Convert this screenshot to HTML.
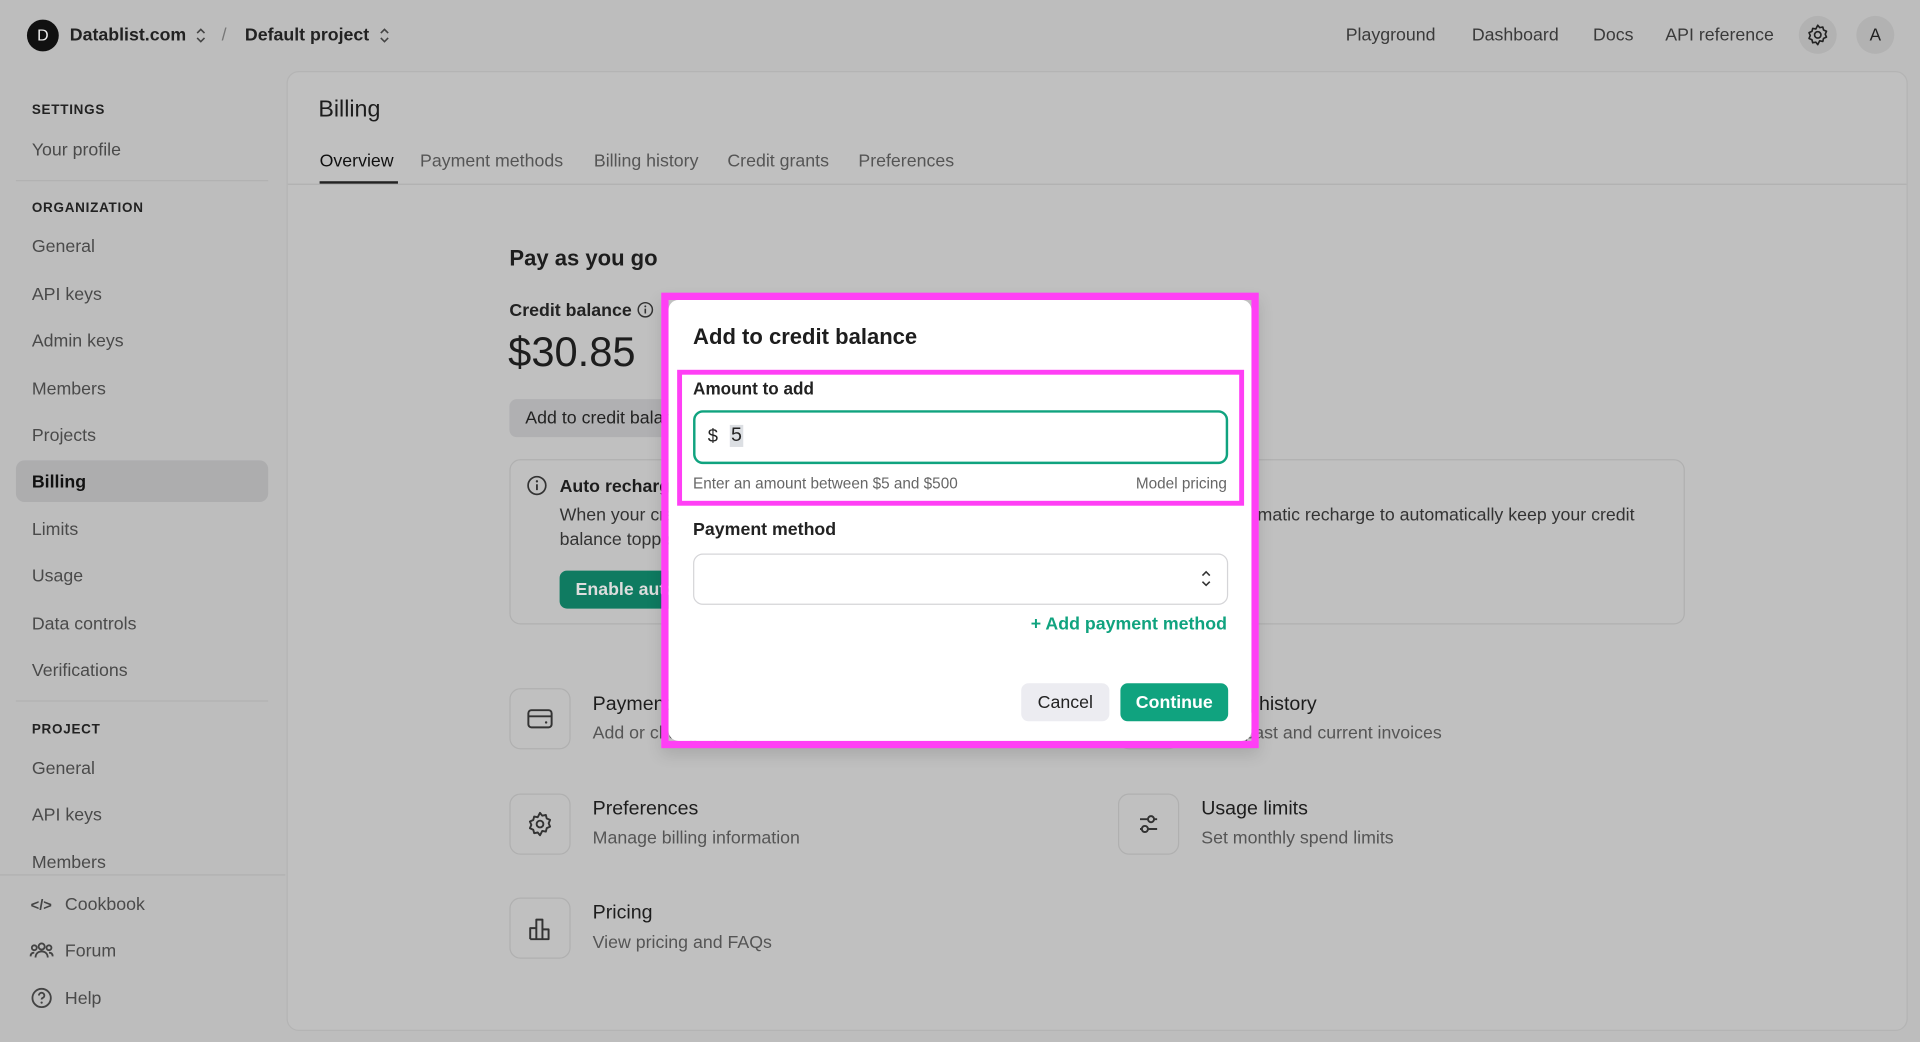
<!DOCTYPE html>
<html><head><meta charset="utf-8"><style>
*{box-sizing:border-box;margin:0;padding:0}
html,body{width:1920px;height:1042px;overflow:hidden;background:#bdbdbd}
body{font-family:"Liberation Sans",sans-serif;color:#1a1a1a}
#w{position:absolute;left:0;top:0;width:1568px;height:851px;transform:scale(1.22449);transform-origin:0 0;background:#bdbdbd}
.a{position:absolute;white-space:nowrap}
.nav{font-size:14.5px;color:#3a3a3a}
.sb{font-size:14.5px;color:#4a4a4a;left:26px}
.sh{font-size:11px;font-weight:bold;letter-spacing:.6px;left:26px;color:#222}
.tab{font-size:14.5px;color:#555;top:124px}
.ic{position:absolute;width:50px;height:50px;border:1px solid #b0b0b0;border-radius:9px;background:#c0c0c0;display:flex;align-items:center;justify-content:center}
.ct{font-size:16px;color:#1d1d1d}
.cs{font-size:14.5px;color:#555}
</style></head><body><div id="w">
<!-- header -->
<div class="a" style="left:22px;top:16px;width:26px;height:26px;border-radius:50%;background:#111;color:#eee;font-size:13px;text-align:center;line-height:26px">D</div>
<div class="a" style="left:57px;top:21px;font-size:14.5px;font-weight:bold;color:#222">Datablist.com</div>
<svg class="a" style="left:159px;top:22px" width="10" height="14" viewBox="0 0 10 14"><path d="M2 5l3-3 3 3M2 9l3 3 3-3" stroke="#444" stroke-width="1.3" fill="none"/></svg>
<div class="a" style="left:181px;top:21px;font-size:14.5px;color:#777">/</div>
<div class="a" style="left:200px;top:21px;font-size:14.5px;font-weight:bold;color:#222">Default project</div>
<svg class="a" style="left:309px;top:22px" width="10" height="14" viewBox="0 0 10 14"><path d="M2 5l3-3 3 3M2 9l3 3 3-3" stroke="#444" stroke-width="1.3" fill="none"/></svg>
<div class="a nav" style="left:1099px;top:21px">Playground</div>
<div class="a nav" style="left:1202px;top:21px">Dashboard</div>
<div class="a nav" style="left:1301px;top:21px">Docs</div>
<div class="a nav" style="left:1360px;top:21px">API reference</div>
<div class="a" style="left:1469px;top:13px;width:31px;height:31px;border-radius:50%;background:#b2b2b2"></div>
<svg class="a" style="left:1475px;top:19px" width="19" height="19" viewBox="0 0 24 24"><path d="M12 2l2 2.5 3.2-.6.8 3.1 3 1.3-1.3 3 1.3 3-3 1.3-.8 3.1-3.2-.6L12 22l-2-2.5-3.2.6-.8-3.1-3-1.3 1.3-3-1.3-3 3-1.3.8-3.1 3.2.6z" fill="none" stroke="#222" stroke-width="1.7" stroke-linejoin="round"/><circle cx="12" cy="12" r="3.3" fill="none" stroke="#222" stroke-width="1.7"/></svg>
<div class="a" style="left:1516px;top:13px;width:31px;height:31px;border-radius:50%;background:#b2b2b2;text-align:center;line-height:31px;font-size:14px;color:#222">A</div>
<!-- sidebar -->
<div class="a sh" style="top:84px">SETTINGS</div>
<div class="a sb" style="top:115px">Your profile</div>
<div class="a" style="left:13px;top:147px;width:206px;height:1px;background:#b2b2b2"></div>
<div class="a sh" style="top:164px">ORGANIZATION</div>
<div class="a sb" style="top:194px">General</div>
<div class="a sb" style="top:233px">API keys</div>
<div class="a sb" style="top:271px">Admin keys</div>
<div class="a sb" style="top:310px">Members</div>
<div class="a sb" style="top:348px">Projects</div>
<div class="a" style="left:13px;top:376px;width:206px;height:34px;border-radius:7px;background:#adadae"></div>
<div class="a sb" style="top:386px;color:#111;font-weight:bold">Billing</div>
<div class="a sb" style="top:425px">Limits</div>
<div class="a sb" style="top:463px">Usage</div>
<div class="a sb" style="top:502px">Data controls</div>
<div class="a sb" style="top:540px">Verifications</div>
<div class="a" style="left:13px;top:572px;width:206px;height:1px;background:#b2b2b2"></div>
<div class="a sh" style="top:590px">PROJECT</div>
<div class="a sb" style="top:620px">General</div>
<div class="a sb" style="top:658px">API keys</div>
<div class="a sb" style="top:697px">Members</div>
<div class="a" style="left:0;top:714px;width:233px;height:137px;background:#bdbdbd;border-top:1px solid #b0b0b0"></div>
<div class="a sb" style="left:53px;top:731px">Cookbook</div>
<div class="a sb" style="left:53px;top:769px">Forum</div>
<div class="a sb" style="left:53px;top:808px">Help</div>
<div class="a" style="left:25px;top:732px;font-size:12px;font-weight:bold;color:#444">&lt;/&gt;</div>
<svg class="a" style="left:24px;top:769px" width="20" height="14" viewBox="0 0 20 14"><circle cx="10" cy="4" r="2.5" fill="none" stroke="#444" stroke-width="1.5"/><circle cx="4" cy="5" r="2" fill="none" stroke="#444" stroke-width="1.5"/><circle cx="16" cy="5" r="2" fill="none" stroke="#444" stroke-width="1.5"/><path d="M5 13c0-3 2-5 5-5s5 2 5 5M1 12c0-2 1-3 3-3M19 12c0-2-1-3-3-3" fill="none" stroke="#444" stroke-width="1.5"/></svg>
<svg class="a" style="left:25px;top:806px" width="18" height="18" viewBox="0 0 18 18"><circle cx="9" cy="9" r="7.5" fill="none" stroke="#444" stroke-width="1.5"/><path d="M6.8 7a2.2 2.2 0 1 1 3 2c-.6.3-.8.7-.8 1.3" fill="none" stroke="#444" stroke-width="1.5"/><circle cx="9" cy="12.8" r=".9" fill="#444"/></svg>
<!-- main panel -->
<div class="a" style="left:234px;top:58px;width:1324px;height:784px;background:#c0c0c0;border:1px solid #b4b4b4;border-radius:10px"></div>
<div class="a" style="left:260px;top:79px;font-size:19px;color:#1d1d1d">Billing</div>
<div class="a tab" style="left:261px;color:#111">Overview</div>
<div class="a tab" style="left:343px">Payment methods</div>
<div class="a tab" style="left:485px">Billing history</div>
<div class="a tab" style="left:594px">Credit grants</div>
<div class="a tab" style="left:701px">Preferences</div>
<div class="a" style="left:235px;top:150px;width:1322px;height:1px;background:#b0b0b0"></div>
<div class="a" style="left:261px;top:148px;width:64px;height:2px;background:#222"></div>
<div class="a" style="left:416px;top:201px;font-size:18px;font-weight:bold;color:#1d1d1d">Pay as you go</div>
<div class="a" style="left:416px;top:246px;font-size:14.5px;font-weight:bold;color:#222">Credit balance</div>
<svg class="a" style="left:520px;top:246px" width="14" height="14" viewBox="0 0 14 14"><circle cx="7" cy="7" r="5.8" fill="none" stroke="#333" stroke-width="1.2"/><path d="M7 6v4" stroke="#333" stroke-width="1.3"/><circle cx="7" cy="4.2" r=".8" fill="#333"/></svg>
<div class="a" style="left:415px;top:269px;font-size:34px;color:#1d1d1d">$30.85</div>
<div class="a" style="left:416px;top:326px;width:140px;height:31px;border-radius:6px;background:#b0b0b2;padding:8px 13px;font-size:14.5px;color:#222;overflow:hidden">Add to credit balance</div>
<div class="a" style="left:416px;top:375px;width:960px;height:135px;border:1px solid #b0b0b0;border-radius:9px"></div>
<svg class="a" style="left:430px;top:388px" width="17" height="17" viewBox="0 0 16 16"><circle cx="8" cy="8" r="6.8" fill="none" stroke="#333" stroke-width="1.3"/><path d="M8 7v4.5" stroke="#333" stroke-width="1.4"/><circle cx="8" cy="4.8" r=".9" fill="#333"/></svg>
<div class="a" style="left:457px;top:390px;font-size:14.5px;font-weight:bold;color:#1d1d1d">Auto recharge</div>
<div class="a" style="left:457px;top:413px;font-size:14.5px;color:#333">When your credit</div>
<div class="a" style="left:457px;top:433px;font-size:14.5px;color:#333">balance topped</div>
<div class="a" style="left:1027px;top:413px;font-size:14.5px;color:#333">matic recharge to automatically keep your credit</div>
<div class="a" style="left:457px;top:466px;width:100px;height:31px;border-radius:6px;background:#0f7b61;padding:8px 13px;font-size:14.5px;color:#ddd;font-weight:bold;overflow:hidden">Enable auto</div>
<!-- cards -->
<div class="ic" style="left:416px;top:562px"><svg width="22" height="18" viewBox="0 0 22 18"><rect x="1.5" y="2" width="19" height="14" rx="2.5" fill="none" stroke="#333" stroke-width="1.6"/><path d="M1.5 7h19" stroke="#333" stroke-width="1.6"/><circle cx="16" cy="12" r="1" fill="#333"/></svg></div>
<div class="a ct" style="left:484px;top:567px">Payment methods</div>
<div class="a cs" style="left:484px;top:591px">Add or change payment method</div>
<div class="ic" style="left:913px;top:562px"></div>
<div class="a ct" style="left:981px;top:567px">Billing history</div>
<div class="a cs" style="left:981px;top:591px">View past and current invoices</div>
<div class="ic" style="left:416px;top:648px"><svg width="22" height="22" viewBox="0 0 24 24"><path d="M12 2l2 2.5 3.2-.6.8 3.1 3 1.3-1.3 3 1.3 3-3 1.3-.8 3.1-3.2-.6L12 22l-2-2.5-3.2.6-.8-3.1-3-1.3 1.3-3-1.3-3 3-1.3.8-3.1 3.2.6z" fill="none" stroke="#333" stroke-width="1.7" stroke-linejoin="round"/><circle cx="12" cy="12" r="3" fill="none" stroke="#333" stroke-width="1.7"/></svg></div>
<div class="a ct" style="left:484px;top:652px">Preferences</div>
<div class="a cs" style="left:484px;top:677px">Manage billing information</div>
<div class="ic" style="left:913px;top:648px"><svg width="22" height="22" viewBox="0 0 22 22"><path d="M4 7h14M4 15h14" stroke="#333" stroke-width="1.6"/><circle cx="13" cy="7" r="2.5" fill="#c0c0c0" stroke="#333" stroke-width="1.6"/><circle cx="8" cy="15" r="2.5" fill="#c0c0c0" stroke="#333" stroke-width="1.6"/></svg></div>
<div class="a ct" style="left:981px;top:652px">Usage limits</div>
<div class="a cs" style="left:981px;top:677px">Set monthly spend limits</div>
<div class="ic" style="left:416px;top:733px"><svg width="22" height="22" viewBox="0 0 22 22"><path d="M3 20V11h5v9M8 20V4h5v16M13 20v-8h5v8zM3 20h15" fill="none" stroke="#333" stroke-width="1.6" stroke-linejoin="round"/></svg></div>
<div class="a ct" style="left:484px;top:737px">Pricing</div>
<div class="a cs" style="left:484px;top:762px">View pricing and FAQs</div>
<!-- modal -->
<div class="a" style="left:540px;top:239px;width:488px;height:372px;border:6px solid #ff3ff5;box-shadow:0 6px 12px rgba(0,0,0,.12)"></div>
<div class="a" style="left:546px;top:245px;width:476px;height:360px;background:#fff;border-radius:8px"></div>
<div class="a" style="left:566px;top:265px;font-size:18px;font-weight:bold;color:#1d1d1d">Add to credit balance</div>
<div class="a" style="left:553px;top:302px;width:463px;height:111px;border:4px solid #ff3ff5"></div>
<div class="a" style="left:566px;top:309px;font-size:14px;font-weight:bold;color:#222">Amount to add</div>
<div class="a" style="left:566px;top:335px;width:437px;height:44px;border:2px solid #10a37f;border-radius:8px"></div>
<div class="a" style="left:578px;top:348px;font-size:15px;color:#222">$</div>
<div class="a" style="left:596px;top:347px;font-size:16px;color:#222;background:#dcdfe3;padding:0 1px">5</div>
<div class="a" style="left:566px;top:388px;font-size:12.5px;color:#666">Enter an amount between $5 and $500</div>
<div class="a" style="right:566px;top:388px;font-size:12.5px;color:#666">Model pricing</div>
<div class="a" style="left:566px;top:425px;font-size:14.5px;font-weight:bold;color:#222">Payment method</div>
<div class="a" style="left:566px;top:452px;width:437px;height:42px;border:1px solid #d5d5d8;border-radius:8px"></div>
<svg class="a" style="left:980px;top:465px" width="10" height="15" viewBox="0 0 10 15"><path d="M2 5l3-3 3 3M2 10l3 3 3-3" stroke="#333" stroke-width="1.3" fill="none"/></svg>
<div class="a" style="right:566px;top:502px;font-size:14.5px;font-weight:bold;color:#10a37f">+ Add payment method</div>
<div class="a" style="left:834px;top:558px;width:72px;height:31px;border-radius:6px;background:#ececf1;text-align:center;line-height:33px;font-size:14.5px;color:#222">Cancel</div>
<div class="a" style="left:915px;top:558px;width:88px;height:31px;border-radius:6px;background:#10a37f;text-align:center;line-height:33px;font-size:14.5px;color:#fff;font-weight:bold">Continue</div>
</div></body></html>
